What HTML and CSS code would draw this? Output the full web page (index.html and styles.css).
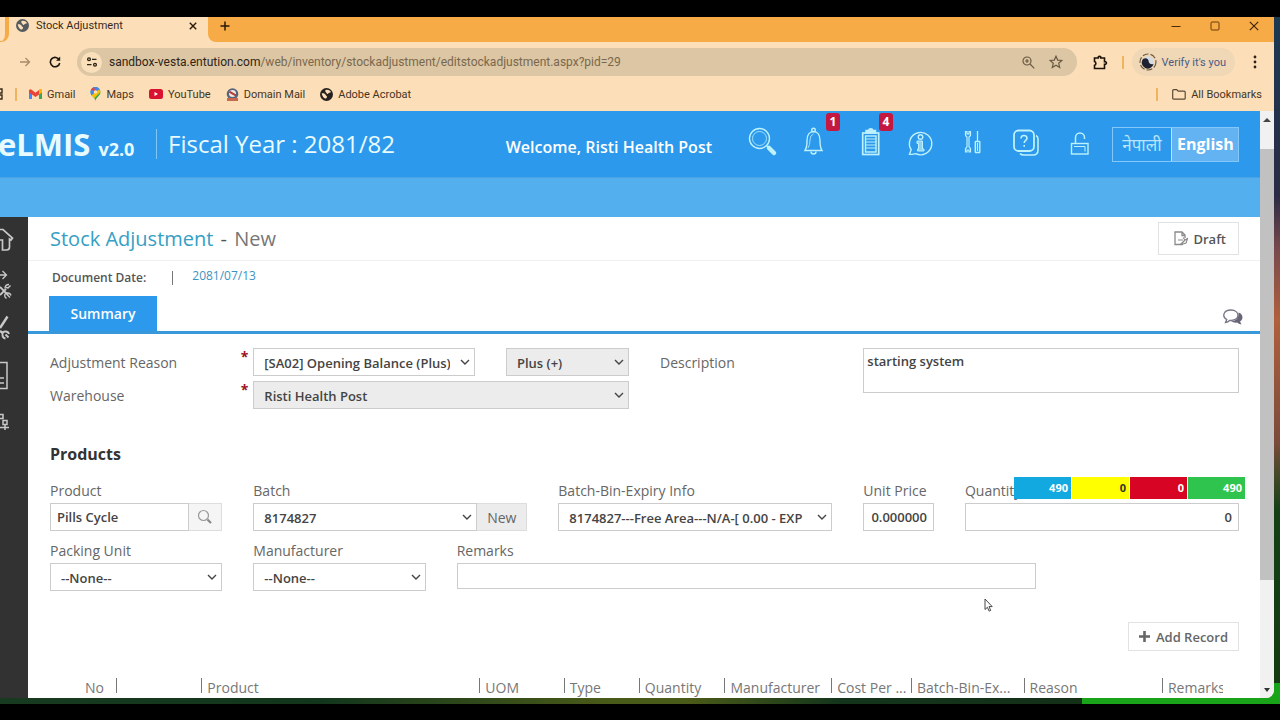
FILE: index.html
```html
<!DOCTYPE html>
<html lang="en">
<head>
<meta charset="utf-8">
<title>Stock Adjustment</title>
<link rel="stylesheet" href="styles.css">
</head>
<body>
<div class="desktop">
<div class="wallpaper">
<div class="window">

  <div class="tabstrip">
    <div class="prev-tab"></div>
    <div class="tab">
      <svg width="13" height="13" viewBox="0 0 16 16"><circle cx="8" cy="8" r="8" fill="#555a5e"/><path d="M2 7c2-1 4 0 5 1.500s2 1 1.500 3-2 1.500-3 1S3 10 2 7zM7 2.500c2-1 5 0 6.500 2.500-1 1.500-3 .5-3.500 2S7.500 6 7 5s-1-1.500 0-2.500z" fill="#fcdfb9"/></svg>
      <span class="tab-title">Stock Adjustment</span>
      <button class="plain" aria-label="Close tab"><svg width="8" height="8" viewBox="0 0 8 8"><path d="M.8.8l6.400 6.400M7.200.8L.8 7.200" stroke="#2b1a08" stroke-width="1.400"/></svg></button>
    </div>
    <div class="strip-rest">
      <button class="plain" aria-label="New tab"><svg width="10" height="10" viewBox="0 0 10 10"><path d="M5 .5v9M.5 5h9" stroke="#2b1a08" stroke-width="1.500"/></svg></button>
      <div class="win-buttons">
        <button class="plain" aria-label="Minimize"><svg width="10" height="10" viewBox="0 0 10 10"><path d="M.5 5.500h9" stroke="#4d2a06"/></svg></button>
        <button class="plain" aria-label="Maximize"><svg width="10" height="10" viewBox="0 0 10 10"><rect x="1" y="1" width="8" height="8" rx="1" fill="none" stroke="#6b3a08"/></svg></button>
        <button class="plain" aria-label="Close"><svg width="10" height="10" viewBox="0 0 10 10"><path d="M.8.8l8.400 8.400M9.200.8L.8 9.200" stroke="#3a1f05" stroke-width="1.100"/></svg></button>
      </div>
    </div>
  </div>

  <div class="toolbar">
    <button class="plain" aria-label="Forward"><svg width="12" height="12" viewBox="0 0 12 12"><path d="M1 6h9.500M6.500 2l4 4-4 4" fill="none" stroke="#a68c6b" stroke-width="1.300"/></svg></button>
    <button class="plain reload" aria-label="Reload"><svg width="12" height="12" viewBox="0 0 12 12"><path d="M10.300 4A4.700 4.700 0 1 0 10.700 7" fill="none" stroke="#1d1710" stroke-width="1.600"/><path d="M11.200.6v4.200H7z" fill="#1d1710"/></svg></button>
    <div class="omnibox">
      <span class="site"><svg width="12" height="12" viewBox="0 0 12 12" fill="none" stroke="#2b2218" stroke-width="1.300"><circle cx="3" cy="3.300" r="1.400"/><path d="M6 3.300h4.500M1 8.700h4.500"/><circle cx="9" cy="8.700" r="1.400"/></svg></span>
      <span class="url"><b>sandbox-vesta.entution.com</b>/web/inventory/stockadjustment/editstockadjustment.aspx?pid=29</span>
      <button class="plain" aria-label="Zoom"><svg width="13" height="13" viewBox="0 0 13 13" fill="none" stroke="#6a5a44" stroke-width="1.200"><circle cx="5" cy="5" r="4"/><path d="M8 8l4.300 4.300M3 5h4M5 3v4"/></svg></button>
      <button class="plain star" aria-label="Bookmark"><svg width="14" height="14" viewBox="0 0 14 14"><path d="M7 1.200l1.700 3.900 4.200.4-3.200 2.800 1 4.100L7 10.200l-3.700 2.200 1-4.100L1.100 5.500l4.200-.4z" fill="none" stroke="#6a5a44" stroke-width="1.200"/></svg></button>
    </div>
    <button class="plain ext" aria-label="Extensions"><svg width="15" height="15" viewBox="0 0 15 15"><path d="M1.500 3h3.800V2a1.500 1.500 0 0 1 2.500 0v1h3.700v3.700h1a1.300 1.300 0 0 1 0 2.500h-1v4.300h-10v-3.200a2 2 0 0 0 0-3.800z" fill="none" stroke="#1d1208" stroke-width="1.600"/></svg></button>
    <span class="divider"></span>
    <button class="profile"><svg width="18" height="18" viewBox="0 0 18 18"><circle cx="9" cy="9" r="8" fill="none" stroke="#6c5c43" stroke-width="1.200" stroke-dasharray="6 2"/><circle cx="9" cy="9" r="5.800" fill="#d5dbe2"/><path d="M4 6a6 6 0 1 0 10.600 5c-3 1-5-1-5-3S7 4 4 6z" fill="#1c2230"/></svg>Verify it's you</button>
    <button class="plain more" aria-label="Menu"><svg width="4" height="14" viewBox="0 0 4 14" fill="#2b2218"><circle cx="2" cy="2" r="1.400"/><circle cx="2" cy="7" r="1.400"/><circle cx="2" cy="12" r="1.400"/></svg></button>
  </div>

  <nav class="bookmarks">
    <svg class="apps" width="3" height="12" viewBox="0 0 3 12"><path d="M0 1h2v4H0M0 7h2v4H0" fill="none" stroke="#3a2c1b" stroke-width="1.400"/></svg>
    <span class="divider"></span>
    <a href="#"><svg width="13" height="10" viewBox="0 0 13 10"><path d="M0 1.500L3 3v7H0z" fill="#4285f4"/><path d="M10 3l3-1.500V10h-3z" fill="#34a853"/><path d="M0 1.500Q1-.5 3 1l3.500 2.800L10 1q2-1.500 3 .5V3.500L6.500 8 0 3.500z" fill="#ea4335"/><path d="M10 1q2-1.500 3 .5V3.500L10 5.600z" fill="#fbbc04"/></svg>Gmail</a>
    <a href="#"><svg width="11" height="14" viewBox="0 0 11 14"><path d="M5.500 14C5 10 .5 9 .5 5a5 5 0 0 1 10 0c0 4-4.500 5-5 9z" fill="#34a853"/><path d="M.5 5A5 5 0 0 1 5.500 0v5L1.500 8.500Q.5 7 .5 5z" fill="#4285f4"/><path d="M1.200 2.500A5 5 0 0 1 4 .3L5.500 5z" fill="#ea4335"/><path d="M1.500 8.500L9 1.500l1.500 3.500-6 6z" fill="#fbbc04"/><path d="M5.500 0a5 5 0 0 1 4 2L6 5z" fill="#4285f4"/><circle cx="5.500" cy="5" r="1.800" fill="#fcdfb9"/></svg>Maps</a>
    <a href="#"><svg width="14" height="10" viewBox="0 0 14 10"><rect width="14" height="10" rx="2.500" fill="#d8122f"/><path d="M5.500 3v4L9 5z" fill="#fff"/></svg>YouTube</a>
    <a href="#"><svg width="13" height="13" viewBox="0 0 13 13"><circle cx="6.500" cy="6" r="5.800" fill="#55657c"/><circle cx="6.500" cy="5.500" r="3.500" fill="#eee7e3"/><path d="M3 4l7 4M4 3.500L10 7" stroke="#b33e3a" stroke-width="1.200"/><path d="M1 10h11v3H1z" fill="#c8684c"/></svg>Domain Mail</a>
    <a href="#"><svg width="13" height="13" viewBox="0 0 16 16"><circle cx="8" cy="8" r="8" fill="#26221f"/><path d="M2 7c2-1 4 0 5 1.500s2 1 1.500 3-2 1.500-3 1S3 10 2 7zM7 2.500c2-1 5 0 6.500 2.500-1 1.500-3 .5-3.500 2S7.500 6 7 5s-1-1.500 0-2.500z" fill="#fcdfb9"/></svg>Adobe Acrobat</a>
    <span class="divider all"></span>
    <a href="#"><svg width="14" height="11" viewBox="0 0 14 11"><path d="M.7 9.300V1.700q0-1 1-1h3L6.200 2.200h6q1 0 1 1v6q0 1-1 1H1.700q-1 0-1-1z" fill="none" stroke="#5c4a33" stroke-width="1.200"/></svg>All Bookmarks</a>
  </nav>

  <div class="viewport">
    <div class="page">
      <header class="topbar">
        <div class="brand">eLMIS <small>v2.0</small></div>
        <div class="fiscal">Fiscal Year : 2081/82</div>
        <div class="welcome">Welcome, Risti Health Post</div>
        <div class="tools">
          <button aria-label="Search"><svg viewBox="735 119 53 50"><circle cx="759.500" cy="138.500" r="10"/><circle cx="759.500" cy="138.500" r="7" stroke-width=".8"/><path d="M766.500 145.500l3 3" stroke-width="1.500"/><path d="M769 148l5 5" stroke-width="4.500" stroke-linecap="round"/></svg></button>
          <button aria-label="Alerts"><svg viewBox="788 119 53 50"><path d="M805 150.500q2-3 2-10c0-6 3-9 6.500-9s6.500 3 6.500 9q0 7 2 10z"/><path d="M808 148q2-3 2-8 0-5 3.500-6" stroke-width=".8"/><circle cx="813.500" cy="130" r="1.800"/><path d="M811 151.500a2.500 2.500 0 0 0 5 0"/></svg><span class="badge">1</span></button>
          <button aria-label="Tasks"><svg viewBox="841 119 53 50"><rect x="862.700" y="133" width="16" height="21.500" stroke-width="1.700"/><rect x="865.500" y="136" width="10.500" height="16"/><path d="M866 139h10M866 142h10M866 145h10M866 148h10" stroke-width="1.100"/><path d="M866 133v-2.500h2.500a2.300 2.300 0 0 1 4.500 0h2.500v2.500z" fill="#bdf1fb"/></svg><span class="badge">4</span></button>
          <button aria-label="Information"><svg viewBox="894 119 53 50"><path d="M909.500 154.300l1.700-4.600a11.200 11.200 0 1 1 4.500 4q-2 .8-6.200.6z"/><circle cx="920.500" cy="137" r="2.300"/><path d="M918 141h4.500v8h1.500v2h-6.500v-2h1v-5.500H917V141z" fill="#8fd4f8" stroke-width="1"/></svg></button>
          <button aria-label="Settings"><svg viewBox="947 119 53 50"><path d="M965.500 131.500v4l1.500 1.500v10l-1.500 1.500v3.500h1.500v-2h2v2h1.500v-3.500L969 147v-10l1.500-1.500v-4H969v2.300h-2v-2.300z" stroke-width="1.200"/><path d="M977.500 131v10" stroke-width="1.300"/><rect x="975.300" y="141.500" width="4.500" height="11" rx=".5"/><path d="M977.500 143v8" stroke-width="1.200"/></svg></button>
          <button aria-label="Help"><svg viewBox="1000 119 53 50"><rect x="1014" y="130.500" width="20" height="20.500" rx="4.500" stroke-width="1.800"/><path d="M1036 135.500q2 1 2 3.500v11q0 5-5 5h-9q-3 0-4-1.500" stroke-width="1.600"/><path d="M1021 138.500q0-3 3-3t3 2.700c0 2.200-2.800 2.300-2.800 4.800M1024.200 145v1.800" stroke-width="1.600"/></svg></button>
          <button aria-label="Lock"><svg viewBox="1053 119 53 50"><rect x="1071.500" y="143.500" width="16.500" height="10.500"/><path d="M1074 146.500h11v5" stroke-width="1"/><path d="M1075.500 143v-5.500a4.500 4.500 0 0 1 9 0v1.500" stroke-width="1.500"/></svg></button>
        </div>
        <div class="lang">
          <button>नेपाली</button><button class="on">English</button>
        </div>
      </header>
      <div class="subbar"></div>

      <div class="body">
        <aside class="sidebar">
          <svg viewBox="0 223 28 215" width="28" height="215" fill="none" stroke="#c9c9c9" stroke-width="1.700">
            <path d="M0 229.500l3 0 9.500 8.500-1.500 2-1.500-1V247q0 3-3 3H2.500v-10H0"/>
            <path d="M0 275h6M2.500 271l4 4-4 4" stroke-width="1.300"/>
            <path d="M0 287l8 8M0 295l6-6" stroke-width="1.800"/><path d="M10.500 285.500l-2.500 2.500-2-.5M5 288.500q0-4 4-4M11 295.500q-1-3-4-2.500t-2 4l1.500 1.500M7.500 295l2.500 2.500" stroke-width="1.400"/>
            <path d="M0 328l7.500-11.500M0 331l3 2" stroke-width="2.400"/><path d="M9 334q-1-3-4-2.500T2.500 335q0 3 3 3.500M5.500 334.500l3 3" stroke-width="1.900"/>
            <path d="M0 362.500h7v26H0M0 378h4M0 383h4" stroke-width="1.500"/>
            <path d="M0 414.500h3v4H0M3 420.500h4v4H3zM0 427.500h9M5 425v5" stroke-width="1.500"/>
          </svg>
        </aside>
        <main class="content">
          <div class="title-row">
            <h1>Stock Adjustment <span class="dash">-</span> <span class="new">New</span></h1>
            <button class="btn draft"><svg width="14" height="15" viewBox="0 0 14 15"><path d="M11 7V4L8 1H1v12.500h8M8 1v3.500h3" fill="none" stroke="#8a8a8a" stroke-width="1.300"/><path d="M4 9h5M9 6.500l2 2.500-2 2.500M7 13l4-4 2.500-1.500L12 12l-3 1z" fill="none" stroke="#8a8a8a" stroke-width="1.200"/></svg>Draft</button>
          </div>
          <div class="doc-row">
            <span class="doc-label">Document Date:</span><span class="bar"></span><span class="date">2081/07/13</span>
          </div>
          <div class="tab-row">
            <button class="summary">Summary</button>
            <svg class="chat" width="20" height="16" viewBox="0 0 20 16"><path d="M15.500 3.500c5 1.500 5 7 1.500 9l1.500 3q-3-.5-4.500-2-3 .5-6-1 8-.5 7.500-9z" fill="#666678"/><path d="M8 1c9 0 9.500 10.500 0 10.500H6.500Q5 13.200 2.500 13.500l1.300-3C-1.500 7.500.5 1 8 1z" fill="#fff" stroke="#777785" stroke-width="1.300"/></svg>
          </div>

          <form class="grid head-form">
            <label class="s2 req" for="reason">Adjustment Reason</label>
            <div class="s4 pair">
              <div class="select wide"><select id="reason"><option>[SA02] Opening Balance (Plus)</option></select><svg viewBox="0 0 10 6"><path d="M1 1l4 4 4-4"/></svg></div>
              <div class="select off"><select aria-label="Direction" disabled><option>Plus (+)</option></select><svg viewBox="0 0 10 6"><path d="M1 1l4 4 4-4"/></svg></div>
            </div>
            <label class="s2" for="desc">Description</label>
            <textarea class="desc" id="desc">starting system</textarea>
            <label class="s2 req" for="warehouse">Warehouse</label>
            <div class="s4 select off"><select id="warehouse" disabled><option>Risti Health Post</option></select><svg viewBox="0 0 10 6"><path d="M1 1l4 4 4-4"/></svg></div>
          </form>

          <h2>Products</h2>

          <form class="grid product-form">
            <div class="s2 field"><label for="product">Product</label>
              <div class="group"><input id="product" value="Pills Cycle"><button class="addon" type="button" aria-label="Find product"><svg width="16" height="16" viewBox="0 0 16 16"><circle cx="6.500" cy="6.500" r="5" fill="none" stroke="#999" stroke-width="1.200"/><path d="M10.500 10.500l3.500 3.500" stroke="#888" stroke-width="2.200"/></svg></button></div></div>
            <div class="s3 field"><label for="batch">Batch</label>
              <div class="group"><div class="select"><select id="batch"><option>8174827</option></select><svg viewBox="0 0 10 6"><path d="M1 1l4 4 4-4"/></svg></div><button class="addon new-batch" type="button">New</button></div></div>
            <div class="s3 field"><label for="bin">Batch-Bin-Expiry Info</label>
              <div class="select"><select id="bin"><option>8174827---Free Area---N/A-[ 0.00 - EXP</option></select><svg viewBox="0 0 10 6"><path d="M1 1l4 4 4-4"/></svg></div></div>
            <div class="s1 field"><label for="price">Unit Price</label><input class="num" id="price" value="0.000000"></div>
            <div class="s3 field qty"><label for="qty">Quantity</label><input class="num" id="qty" value="0">
              <div class="stock"><span class="blue">490</span><span class="yellow">0</span><span class="red">0</span><span class="green">490</span></div></div>
            <div class="s2 field"><label for="pack">Packing Unit</label>
              <div class="select"><select id="pack"><option>--None--</option></select><svg viewBox="0 0 10 6"><path d="M1 1l4 4 4-4"/></svg></div></div>
            <div class="s2 field"><label for="maker">Manufacturer</label>
              <div class="select"><select id="maker"><option>--None--</option></select><svg viewBox="0 0 10 6"><path d="M1 1l4 4 4-4"/></svg></div></div>
            <div class="s6 field"><label for="remarks">Remarks</label><input class="remarks" id="remarks"></div>
          </form>

          <div class="actions"><button class="btn add"><svg width="11" height="11" viewBox="0 0 11 11"><path d="M5.500 0v11M0 5.500h11" stroke="#666" stroke-width="2.600"/></svg>Add Record</button></div>

          <table class="records">
            <thead><tr><th class="c-no">No</th><th class="c-pick"></th><th class="c-product">Product</th><th class="c-uom">UOM</th><th class="c-type">Type</th><th class="c-qty">Quantity</th><th class="c-maker">Manufacturer</th><th class="c-cost">Cost Per ...</th><th class="c-bin">Batch-Bin-Ex...</th><th class="c-reason">Reason</th><th class="c-remarks">Remarks</th></tr></thead>
          </table>
        </main>
      </div>
      <svg class="cursor" width="9" height="14" viewBox="0 0 9 14"><path d="M1 1v10.500l2.400-2.200 1.700 3.800 1.600-.7L5 8.600h3.200z" fill="#fff" stroke="#333" stroke-width=".9"/></svg>
    </div>
    <div class="scrollbar">
      <div class="cap"><svg width="8" height="5" viewBox="0 0 8 5"><path d="M0 5l4-4 4 4z" fill="#444"/></svg></div>
      <div class="thumb"></div>
      <div class="cap end"><svg width="6" height="4" viewBox="0 0 6 4"><path d="M0 0h6L3 4z" fill="#333"/></svg></div>
    </div>
  </div>
</div>
</div>
</div>
</body>
</html>
```
FILE: styles.css
```css
* { box-sizing: border-box; }
body { margin: 0; font-family: "Open Sans", "Noto Sans", sans-serif; font-size: 14px; color: #666; }
button, input, select, textarea { font: inherit; color: inherit; margin: 0; border-radius: 0; }
svg { display: block; flex: none; }

.desktop { height: 100vh; padding: 17px 0 16px; background: #000; overflow: hidden; }
.wallpaper { height: 100%; padding: 0 6px 6px 0; background:
  linear-gradient(#19a319, #19a319) right bottom / 198px 21px no-repeat,
  linear-gradient(90deg, #173a20, #12351c 25%, #4a5a18 48%, #4a5a18 54%, #14351c 66%, #142c14) left bottom / calc(100% - 6px) 6px no-repeat,
  linear-gradient(#1b3a52, #2b2b45 26%, #7a4a4c 34%, #b0603c 44%, #7b4a3a 62%, #4a4a2a 66%, #143f17 72%, #163a12 100%); }
.window { height: 100%; display: flex; flex-direction: column; overflow: hidden; border-radius: 0 0 8px 0; background: #fcdfb9; }

/* browser chrome */
.tabstrip, .toolbar, .bookmarks { font-family: Roboto, "Open Sans", sans-serif; }
.plain { display: flex; align-items: center; justify-content: center; padding: 0; border: 0; background: none; }
.tabstrip { display: flex; height: 25px; background: linear-gradient(90deg, #fcdfb9 50%, #f7ab46 50%); color: #3a2a18; font-size: 11px; }
.prev-tab { width: 9px; border: solid #f7ab46; border-width: 0 4px 1px 0; border-radius: 0 0 8px 0; background: #fcdfb9; }
.tab { width: 199px; display: flex; align-items: center; gap: 7px; padding: 0 11px 8px 7px; background: #fcdfb9; }
.tab-title { flex: 1; }
.strip-rest { flex: 1; display: flex; align-items: center; justify-content: space-between; padding: 0 15px 8px 12px; background: #f7ab46; border-radius: 0 0 0 8px; }
.win-buttons { display: flex; gap: 29px; }
.toolbar { display: flex; align-items: center; height: 40px; padding: 0 17px 0 19px; background: #fcdfb9; }
.reload { margin: 0 16px 0 18px; }
.omnibox { flex: 1; display: flex; align-items: center; height: 28px; padding: 0 14px 0 4px; border-radius: 14px; background: #dcc6a3; font-size: 12px; }
.site { display: flex; align-items: center; justify-content: center; width: 21px; height: 21px; border-radius: 50%; background: #f9dfba; }
.url { flex: 1; padding-left: 7px; color: #7a684e; }
.url b { font-weight: 400; color: #2e2417; }
.star { margin-left: 14px; }
.ext { margin: 0 14px 0 16px; }
.divider { width: 2px; height: 13px; background: #eeb45f; }
.profile { display: flex; align-items: center; gap: 5px; height: 28px; margin: 0 18px 0 8px; padding: 0 9px 0 7px; border: 0; border-radius: 14px; background: #f0d7b5; color: #485c86; font-size: 11px; }
.bookmarks { display: flex; align-items: center; height: 29px; padding: 0 12px 5px 0; font-size: 11px; }
.bookmarks a { display: flex; align-items: center; gap: 5px; margin-right: 15px; color: #45351f; text-decoration: none; }
.bookmarks .divider { margin: 0 12px; }
.bookmarks .all { margin: 0 14px 0 auto; }
.bookmarks a:last-child { margin-right: 0; }

/* page */
.viewport { flex: 1; display: flex; min-height: 0; }
.page { position: relative; flex: 1; display: flex; flex-direction: column; min-width: 0; overflow: hidden; background: #fff; }
.topbar { display: flex; align-items: center; flex: none; height: 67px; padding-right: 21px; background: #2c99ec; border-bottom: 1px solid #4ba2e2; color: #e8fbff; white-space: nowrap; }
.brand { width: 158px; margin-left: -2px; font-size: 31px; font-weight: 700; }
.brand small { font-size: 18px; }
.fiscal { flex: 1; padding-left: 11px; border-left: 1px solid #7cc9f5; font-size: 24px; line-height: 30px; }
.welcome { padding: 6px 23px 0 0; font-size: 16px; font-weight: 600; color: #fff; }
.tools { display: flex; }
.tools button { position: relative; width: 53px; height: 50px; padding: 0; border: 0; background: none; }
.tools svg { width: 53px; height: 50px; fill: none; stroke: #bdf1fb; stroke-width: 1.400; }
.badge { position: absolute; left: 38px; top: -6px; width: 14px; height: 18px; border-radius: 3px; background: #c41840; color: #fff; font-size: 12px; font-weight: 700; line-height: 18px; }
.lang { display: flex; margin-left: 6px; border: 1px solid #83c8f8; }
.lang button { height: 33px; padding: 0 5px; border: 0; background: none; color: #b9e4fb; font-size: 17px; min-width: 58px; }
.lang .on { border-left: 1px solid #b9e4fb; width: 67px; background: #63b3f3; color: #fff; font-size: 16px; font-weight: 700; }
.subbar { flex: none; height: 39px; background: #54afee; }

.body { flex: 1; display: flex; min-height: 0; }
.sidebar { flex: none; width: 28px; padding-top: 6px; background: #323232; overflow: hidden; }
.content { flex: 1; min-width: 0; }
.title-row { display: flex; align-items: center; justify-content: space-between; height: 44px; padding: 0 21px 0 22px; border-bottom: 1px solid #f0f0f0; }
h1 { margin: 0; color: #35a0c4; font-size: 20px; font-weight: 400; }
.dash { margin: 0 2px; color: #555; }
.new { color: #777; }
.btn { display: flex; align-items: center; border: 1px solid #e2e2e2; background: #fff; font-size: 13px; font-weight: 600; color: #555; }
.draft { gap: 5px; height: 33px; padding: 0 12px 0 15px; }
.doc-row { display: flex; align-items: center; height: 35px; padding: 0 0 2px 24px; font-size: 12px; color: #555; }
.doc-label { font-weight: 600; }
.bar { width: 1px; height: 14px; margin: 0 19px 0 26px; background: #777; }
.date { color: #3a94c2; padding-bottom: 4px; }
.tab-row { display: flex; align-items: center; justify-content: space-between; height: 38px; padding: 0 17px 0 21px; border-bottom: 3px solid #3898da; }
.summary { align-self: stretch; width: 108px; border: 0; background: #2c99ec; color: #fff; font-size: 14px; font-weight: 600; }
.chat { margin-top: 6px; }

.grid { display: grid; grid-template-columns: repeat(12, minmax(0, 1fr)); column-gap: 31px; padding: 0 21px 0 22px; }
.s1 { grid-column: span 1; }
.s2 { grid-column: span 2; }
.s3 { grid-column: span 3; }
.s4 { grid-column: span 4; }
.s6 { grid-column: span 6; }
.head-form { margin-top: 14px; row-gap: 5px; }
.head-form label { height: 28px; line-height: 30px; }
.req { position: relative; }
.req::after { content: "*"; position: absolute; right: -26px; top: -6px; color: #a01020; font-weight: 700; }
.pair { display: flex; gap: 31px; }
.pair .select { flex: 1; }
.pair .wide { flex: none; width: 59%; }
.desc { grid-column: 9 / span 4; grid-row: 1 / span 2; height: 45px; padding: 3px; border: 1px solid #ccc; resize: none; overflow: hidden; }
input, select, .desc { color: #444; font-size: 13px; font-weight: 600; }
.select { position: relative; height: 28px; min-width: 0; }
.select select { width: 100%; height: 100%; padding: 1px 24px 0 10px; border: 1px solid #ccc; background: #fff; appearance: none; opacity: 1; }
.select.off select { background: #ececec; }
.select svg { position: absolute; right: 5px; top: 11px; width: 10px; height: 6px; fill: none; stroke: #444; stroke-width: 1.400; pointer-events: none; }
h2 { margin: 32px 0 14px 22px; color: #333; font-size: 16px; line-height: 26px; font-weight: 700; }
.product-form { row-gap: 9px; }
.field label { display: block; height: 22px; line-height: 20px; white-space: nowrap; }
.field { min-width: 0; min-height: 51px; }
input { width: 100%; height: 28px; padding: 0 6px; border: 1px solid #ccc; background: #fff; }
.remarks { height: 26px; }
.num { text-align: right; }
.group { display: flex; }
.group .select { flex: 1; }
.addon { flex: none; display: flex; align-items: center; justify-content: center; width: 33px; border: 1px solid #ddd; border-left: 0; background: #f5f5f5; padding: 0; }
.new-batch { width: 50px; background: #ececec; }
.qty { position: relative; }
.stock { position: absolute; left: 49px; right: -6px; top: -4px; display: grid; grid-template-columns: repeat(4, 1fr); gap: 1px; height: 22px; background: #fff; color: #fff; font-size: 11px; line-height: 22px; font-weight: 700; text-align: right; }
.stock span { padding-right: 3px; }
.blue { background: #12a9e0; }
.yellow { background: #ff0; color: #333; }
.red { background: #d80424; }
.green { background: #2fc44d; }
.actions { display: flex; justify-content: flex-end; padding: 30px 21px 0; }
.add { gap: 6px; height: 29px; padding: 0 10px; color: #666; }
.records { width: calc(100% - 59px); margin: 26px 0 0 22px; border-collapse: collapse; table-layout: fixed; }
.records th { padding: 0; overflow: hidden; color: #777; font-weight: 400; line-height: 22px; text-align: left; white-space: nowrap; }
.records th:not(.c-no)::before { content: ""; display: inline-block; width: 1px; height: 15px; margin-right: 5px; background: #777; }
.records .c-no { width: 5.6%; padding-left: 35px; }
.c-pick { width: 7.3%; }
.c-product { width: 23.7%; }
.c-uom { width: 7.2%; }
.c-type { width: 6.4%; }
.c-qty { width: 7.3%; }
.c-maker { width: 9.1%; }
.c-cost { width: 6.8%; }
.c-bin { width: 9.6%; }
.c-reason { width: 11.8%; }
.c-remarks { width: 5.2%; }

.cursor { position: absolute; left: 984px; top: 487px; }
.scrollbar { flex: none; display: grid; grid-template-rows: 38px 431px 1fr; width: 14px; background: #f1f1f1; }
.thumb { background: #c1c1c1; }
.cap { display: flex; justify-content: center; padding-top: 6px; }
.cap.end { align-items: flex-end; padding-bottom: 6px; }
```
